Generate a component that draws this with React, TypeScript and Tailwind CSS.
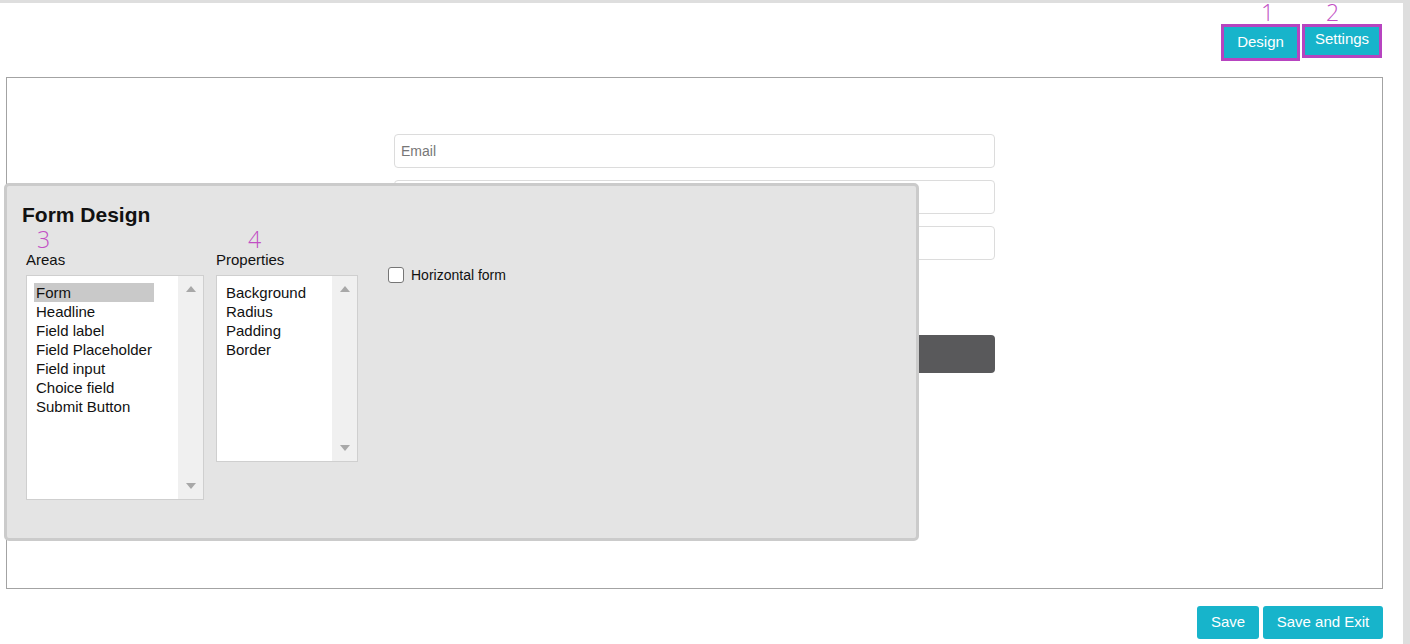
const areas = [
	"Form",
	"Headline",
	"Field label",
	"Field Placeholder",
	"Field input",
	"Choice field",
	"Submit Button",
];

const properties = ["Background", "Radius", "Padding", "Border"];

function Marker({ value, className }: { value: string; className?: string }) {
	return (
		<span
			className={[
				"absolute font-['Open_Sans',sans-serif] text-[23px] font-light leading-[20px] text-[#c24fc4]",
				className ?? "",
			].join(" ")}
		>
			{value}
		</span>
	);
}

function ListBox({
	items,
	selected,
	className,
}: {
	items: string[];
	selected?: string;
	className: string;
}) {
	return (
		<div className={["flex border border-[#cfcfcf] bg-white", className].join(" ")}>
			<div className="min-w-0 flex-1 overflow-hidden pl-[7px] pt-[7px]">
				{items.map((item) => (
					<div
						key={item}
						className={[
							"h-[19px] w-[120px] whitespace-nowrap pl-[2px] text-[15px] leading-[19px] text-[#111]",
							item === selected ? "bg-[#c9c9c9]" : "",
						].join(" ")}
					>
						{item}
					</div>
				))}
			</div>
			<div className="flex w-[25px] shrink-0 flex-col items-center justify-between bg-[#f0f0f0] pb-[10px] pt-[10px]">
				<span className="h-0 w-0 border-x-[5px] border-b-[6px] border-x-transparent border-b-[#a8a8a8]" />
				<span className="h-0 w-0 border-x-[5px] border-t-[6px] border-x-transparent border-t-[#a8a8a8]" />
			</div>
		</div>
	);
}

export default function App() {
	return (
		<div className="h-[644px] w-full overflow-hidden bg-[#dedede] pr-[7px] pt-[3px] font-['Liberation_Sans',Arial,sans-serif]">
			<div className="relative h-full bg-white">
				<div className="flex justify-end gap-[2px] pr-[21px] pt-[21px]">
					<div className="relative">
						<Marker value="1" className="left-[40px] top-[-22px]" />
						<button className="h-[37px] w-[79px] border-[3px] border-[#b744c0] bg-[#17b4cb] text-[15px] text-white">
							Design
						</button>
					</div>
					<div className="relative">
						<Marker value="2" className="left-[24px] top-[-22px]" />
						<button className="h-[34px] w-[80px] border-[3px] border-[#b744c0] bg-[#17b4cb] pb-[3px] text-[15px] text-white">
							Settings
						</button>
					</div>
				</div>

				<div className="relative ml-[6px] mr-[20px] mt-[16px] h-[512px] border border-[#a3a3a3]">
					<div className="mx-auto flex w-[601px] flex-col gap-[12px] pt-[56px]">
						<div className="flex h-[34px] items-center rounded-[4px] border border-[#dcdcdc] px-[6px] text-[14px] text-[#777]">
							Email
						</div>
						<div className="h-[34px] rounded-[4px] border border-[#dcdcdc]" />
						<div className="h-[34px] rounded-[4px] border border-[#dcdcdc]" />
						<div className="mt-[63px] h-[38px] rounded-[4px] bg-[#59595b]" />
					</div>

					<div className="absolute left-[-3px] top-[105px] h-[358px] w-[915px] rounded-[5px] border-[3px] border-[#cbcbcb] bg-[#e4e4e4] pl-[15px] pt-[17px]">
						<h3 className="text-[21px] font-bold leading-[24px] text-[#111]">Form Design</h3>
						<div className="flex pl-[4px] pt-[24px]">
							<div className="relative flex flex-col">
								<Marker value="3" className="left-[11px] top-[-22px]" />
								<span className="text-[15px] leading-[17px] text-[#111]">Areas</span>
								<ListBox items={areas} selected="Form" className="mt-[7px] h-[225px] w-[178px]" />
							</div>
							<div className="relative ml-[12px] flex flex-col">
								<Marker value="4" className="left-[32px] top-[-22px]" />
								<span className="text-[15px] leading-[17px] text-[#111]">Properties</span>
								<ListBox items={properties} className="mt-[7px] h-[187px] w-[142px]" />
							</div>
							<label className="ml-[30px] mt-[16px] flex h-[16px] items-center gap-[7px] text-[14px] text-[#111]">
								<span className="h-[16px] w-[16px] rounded-[3px] border border-[#767676] bg-white" />
								Horizontal form
							</label>
						</div>
					</div>
				</div>

				<div className="mr-[20px] mt-[17px] flex justify-end gap-[4px]">
					<button className="h-[33px] w-[62px] rounded-[3px] bg-[#17b4cb] text-[15px] text-white">Save</button>
					<button className="h-[33px] w-[120px] rounded-[3px] bg-[#17b4cb] text-[15px] text-white">
						Save and Exit
					</button>
				</div>
			</div>
		</div>
	);
}
